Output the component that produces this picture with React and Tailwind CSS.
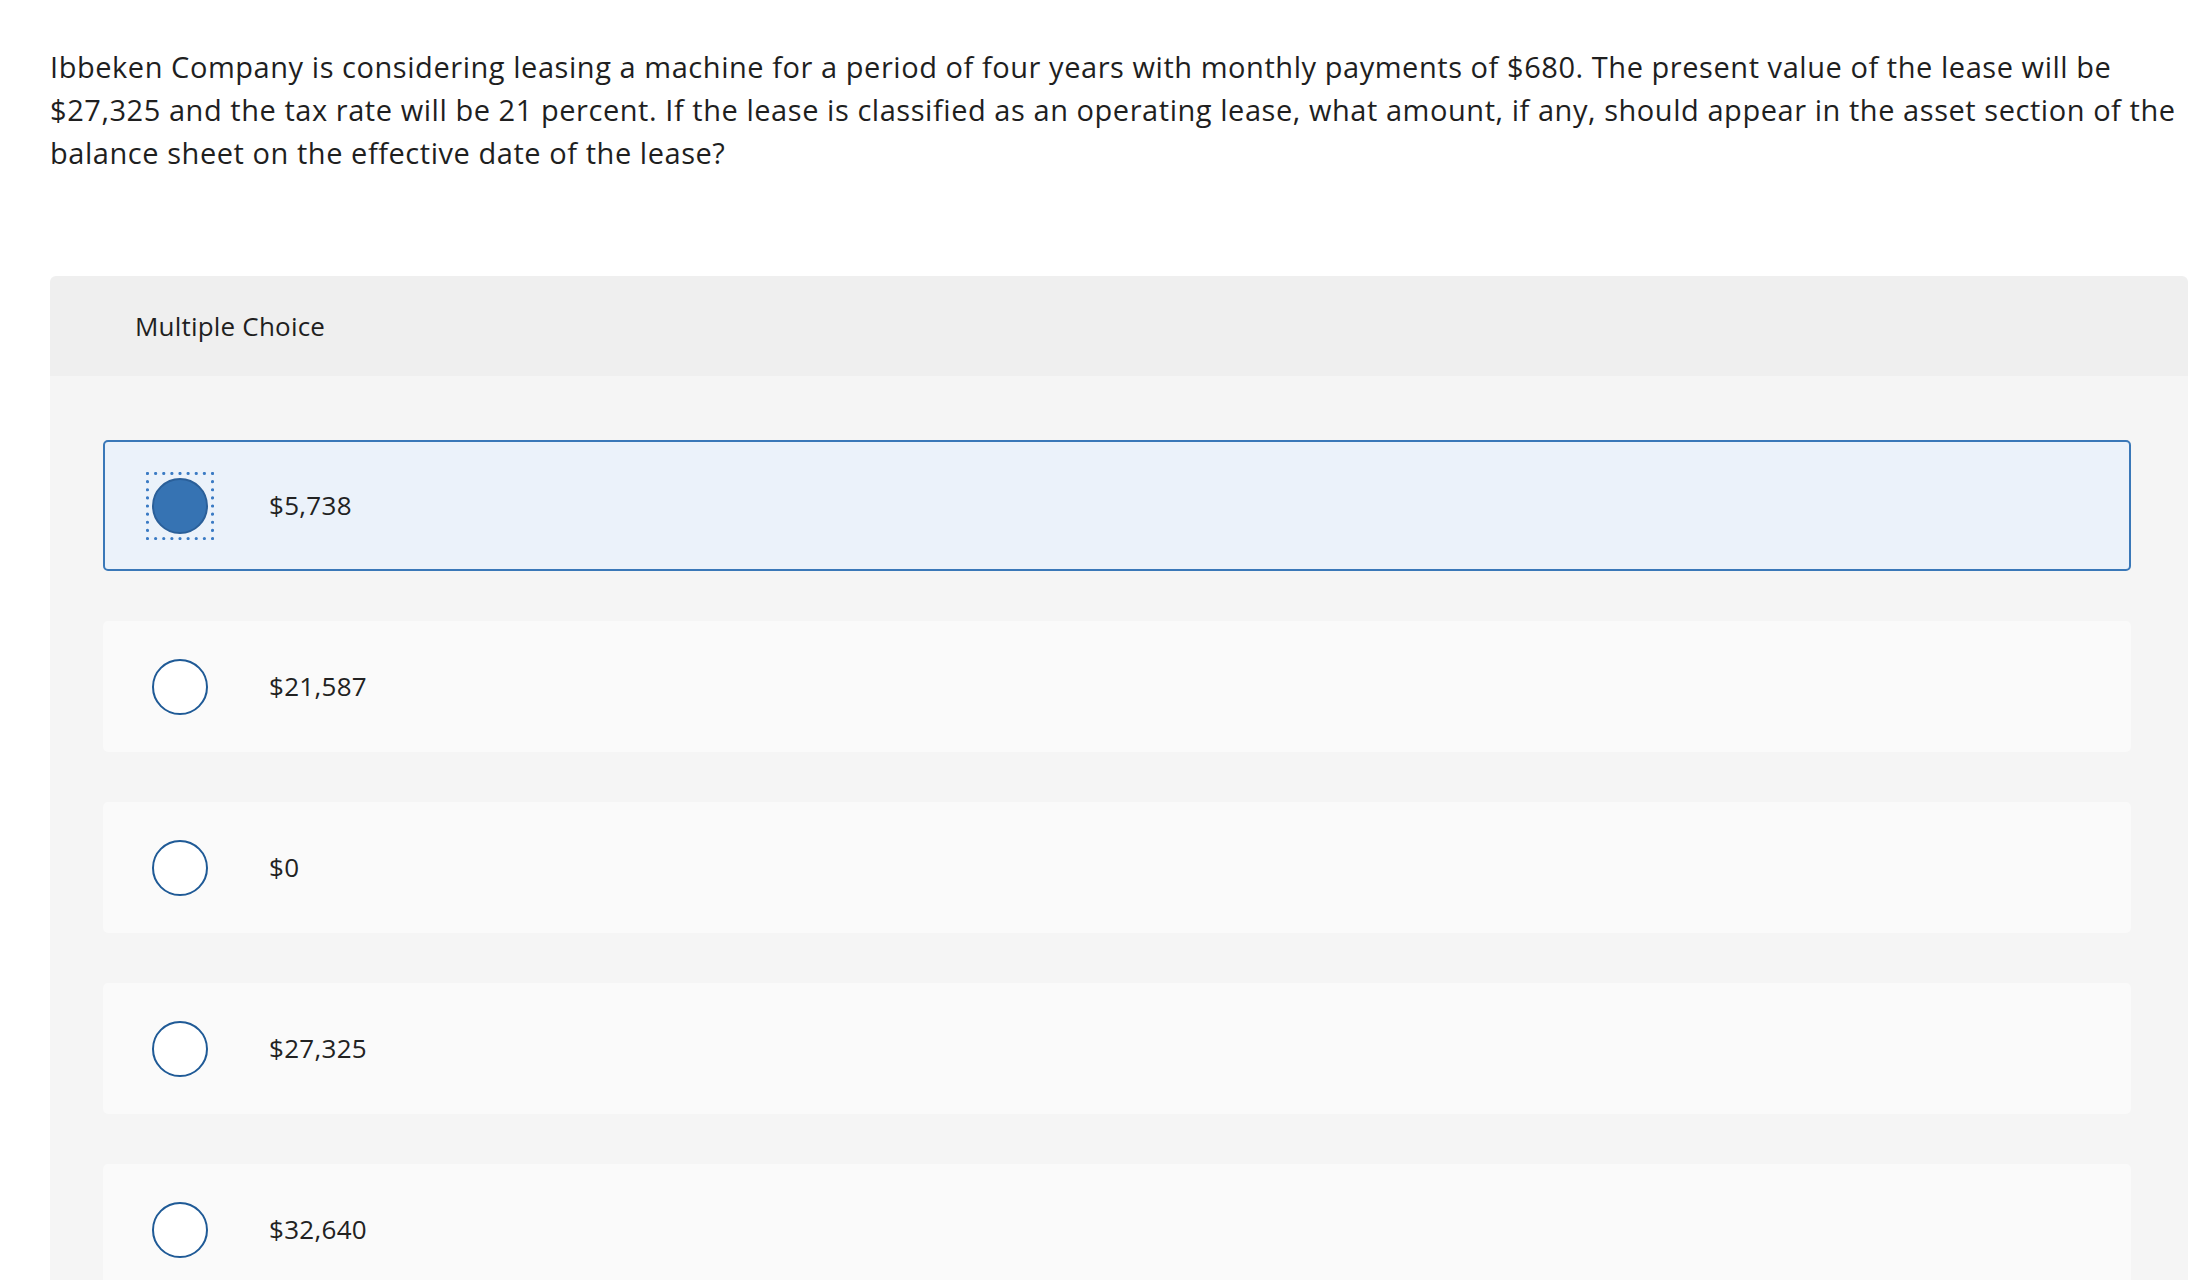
import React from "react";

const options = [
  { label: "$5,738", selected: true },
  { label: "$21,587" },
  { label: "$0" },
  { label: "$27,325" },
  { label: "$32,640" },
];

function Radio({ selected }) {
  return (
    <div className="relative w-[68px] h-[68px] shrink-0 flex items-center justify-center">
      {selected && (
        <svg className="absolute inset-0" width="68" height="68" viewBox="0 0 68 68">
          <rect
            x="1.5"
            y="1.5"
            width="65"
            height="65"
            fill="none"
            stroke="#3b7bc4"
            strokeWidth="3.2"
            strokeLinecap="round"
            strokeDasharray="0 8.125"
          />
        </svg>
      )}
      <div
        className={
          selected
            ? "w-[56px] h-[56px] rounded-full bg-[#3673b3] border-2 border-[#2a5f99]"
            : "w-[56px] h-[56px] rounded-full bg-white border-2 border-[#1f5a96]"
        }
      />
    </div>
  );
}

export default function App() {
  return (
    <div
      className="min-h-screen bg-white text-[#222222]"
      style={{ fontFamily: "'Open Sans', Lato, sans-serif" }}
    >
      <div className="pt-[45px] pl-[50px]">
        <p className="text-[29px] leading-[43px] text-[#1f1f1f] tracking-[0.55px]">
          Ibbeken Company is considering leasing a machine for a period of four years with monthly payments of $680. The present value of the lease will be $27,325 and the tax rate will be 21 percent. If the lease is classified as an operating lease, what amount, if any, should appear in the asset section of the balance sheet on the effective date of the lease?
        </p>
        <div className="mt-[102px] w-[2138px] rounded-t-[6px] overflow-hidden">
          <div className="h-[100px] bg-[#efefef] flex items-center pl-[85px] text-[26px] tracking-[0.2px] text-[#1f1f1f]">
            Multiple Choice
          </div>
          <div className="bg-[#f5f5f5] pl-[53px] pr-[57px] pt-[64px] pb-[50px] flex flex-col gap-[50px]">
            {options.map((o) => (
              <div
                key={o.label}
                className={
                  o.selected
                    ? "h-[131px] rounded-[5px] border-2 border-[#3a78b8] bg-[#ebf2fa] flex items-center pl-[41px]"
                    : "h-[131px] rounded-[5px] border-2 border-transparent bg-[#fafafa] flex items-center pl-[41px]"
                }
              >
                <Radio selected={o.selected} />
                <span className="ml-[55px] text-[26px] tracking-[0.3px] text-[#222222]">{o.label}</span>
              </div>
            ))}
          </div>
        </div>
      </div>
    </div>
  );
}
